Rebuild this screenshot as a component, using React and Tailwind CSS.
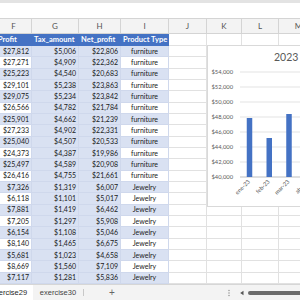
import React from 'react';

const rows = [
  ['$27,812', '$5,006', '$22,806', 'furniture'],
  ['$27,271', '$4,909', '$22,362', 'furniture'],
  ['$25,223', '$4,540', '$20,683', 'furniture'],
  ['$29,101', '$5,238', '$23,863', 'furniture'],
  ['$29,075', '$5,234', '$23,842', 'furniture'],
  ['$26,566', '$4,782', '$21,784', 'furniture'],
  ['$25,901', '$4,662', '$21,239', 'furniture'],
  ['$27,233', '$4,902', '$22,331', 'furniture'],
  ['$25,040', '$4,507', '$20,533', 'furniture'],
  ['$24,373', '$4,387', '$19,986', 'furniture'],
  ['$25,497', '$4,589', '$20,908', 'furniture'],
  ['$26,416', '$4,755', '$21,661', 'furniture'],
  ['$7,326', '$1,319', '$6,007', 'Jewelry'],
  ['$6,118', '$1,101', '$5,017', 'Jewelry'],
  ['$7,881', '$1,419', '$6,462', 'Jewelry'],
  ['$7,205', '$1,297', '$5,908', 'Jewelry'],
  ['$6,154', '$1,108', '$5,046', 'Jewelry'],
  ['$8,140', '$1,465', '$6,675', 'Jewelry'],
  ['$5,681', '$1,023', '$4,658', 'Jewelry'],
  ['$8,669', '$1,560', '$7,109', 'Jewelry'],
  ['$7,117', '$1,281', '$5,836', 'Jewelry'],
];

const letters = ['F', 'G', 'H', 'I', 'J', 'K', 'L', 'M'];
const headers = ['Profit', 'Tax_amount', 'Net_profit', 'Product Type'];
const gridCols = 'grid grid-cols-[36px_47px_42px_48px_38px_35px_37px_40px]';

const ticks = ['$54,000', '$52,000', '$50,000', '$48,000', '$46,000', '$44,000', '$42,000', '$40,000'];
const bars = [
  { label: 'ene-23', top: 72 },
  { label: 'feb-23', top: 92 },
  { label: 'mar-23', top: 68 },
  { label: 'abr-23', top: 78 },
];

function Chart() {
  return (
    <div className="absolute left-[207px] top-[26px] w-[200px] h-[162px] bg-white border border-[#d9d9d9]">
      <div className="pl-[66px] pt-[6px] text-[10.5px] leading-none text-[#595959] font-['Lato',sans-serif]">
        2023 Income
      </div>
      <svg className="absolute left-0 top-0" width="200" height="162">
        {ticks.map((t, i) => (
          <g key={t}>
            <line x1="32" x2="200" y1={26 + i * 15} y2={26 + i * 15} stroke={i === 7 ? '#bfbfbf' : '#e3e3e3'} strokeWidth="1" />
            <text x="25" y={28 + i * 15} textAnchor="end" fontSize="5.8" fill="#595959" fontFamily="Lato, sans-serif">
              {t}
            </text>
          </g>
        ))}
        {bars.map((b, i) => {
          const cx = 41.5 + i * 19.75;
          return (
            <g key={b.label}>
              <rect x={cx - 2.75} y={b.top} width="5.5" height={131 - b.top} fill="#4472c4" />
              <text
                x={cx + 1}
                y="136"
                textAnchor="end"
                fontSize="5.8"
                fill="#595959"
                fontFamily="Lato, sans-serif"
                transform={`rotate(-45 ${cx + 1} 136)`}
              >
                {b.label}
              </text>
            </g>
          );
        })}
      </svg>
    </div>
  );
}

function DataRow({ row, index }) {
  const band = index % 2 === 0;
  const fill = band ? 'bg-[#d9e1f2]' : 'bg-white';
  const num = 'flex items-center justify-end pr-[2px] border-r border-b border-[#cfd8ec]';
  return (
    <div className={`${gridCols} h-[11.33px] text-[7px] leading-none text-[#1a1a1a]`}>
      <div className={`${num} ${fill}`}>{row[0]}</div>
      <div className={`${num} bg-[#d9e1f2]`}>{row[1]}</div>
      <div className={`${num} bg-[#d9e1f2]`}>{row[2]}</div>
      <div className={`flex items-center justify-center border-r border-b border-[#cfd8ec] ${fill}`}>{row[3]}</div>
      <div className="border-r border-b border-[#e1e1e1]" />
      <div className="border-r border-b border-[#e1e1e1]" />
      <div className="border-r border-b border-[#e1e1e1]" />
      <div className="border-r border-b border-[#e1e1e1]" />
    </div>
  );
}

export default function App() {
  return (
    <div className="w-[300px] h-[300px] overflow-hidden bg-white flex flex-col font-['Lato',sans-serif]">
      <div className="h-[3px] shrink-0 bg-[#e3e3e3]" />
      <div className="h-[16px] shrink-0 bg-white border-b border-[#d4d4d4]" />

      <div className="relative flex-1 overflow-hidden">
        <div className="ml-[-4px]">
          {/* column letters */}
          <div className={`${gridCols} h-[15px] bg-[#f3f3f3] text-[8px] text-[#555]`}>
            {letters.map((l) => (
              <div key={l} className="flex items-center justify-center border-r border-b border-[#d4d4d4]">
                {l}
              </div>
            ))}
          </div>

          {/* table header */}
          <div className={`${gridCols} h-[12px] text-[7.5px] leading-none font-bold text-white`}>
            {headers.map((h) => (
              <div key={h} className="flex items-center pl-[2px] bg-[#4472c4] whitespace-nowrap overflow-hidden">
                {h}
              </div>
            ))}
            <div className="border-r border-b border-[#e1e1e1]" />
            <div className="border-r border-b border-[#e1e1e1]" />
            <div className="border-r border-b border-[#e1e1e1]" />
            <div className="border-r border-b border-[#e1e1e1]" />
          </div>

          {rows.map((r, i) => (
            <DataRow key={i} row={r} index={i} />
          ))}
        </div>

        <Chart />
      </div>

      {/* sheet tabs */}
      <div className="h-[16px] shrink-0 flex items-stretch bg-[#f3f3f3] border-t border-[#d6d6d6] font-['Liberation_Sans',sans-serif] text-[7.5px] text-[#444] overflow-hidden">
        <div className="ml-[-15px] w-[48px] shrink-0 bg-white flex items-center justify-center">
          <span className="relative text-[#1f1f1f]">
            exercise29
            <span className="absolute left-0 right-0 bottom-[-4px] h-[1.5px] bg-[#107c41]" />
          </span>
        </div>
        <div className="w-[50px] shrink-0 flex items-center justify-center">exercise30</div>
        <div className="w-px shrink-0 my-[4px] bg-[#c8c8c8]" />
        <div className="w-[56px] shrink-0 flex items-center justify-center text-[10px] text-[#666]">+</div>
        <div className="flex-1" />
        <div className="w-[76px] shrink-0 flex items-center overflow-hidden">
          <svg width="10" height="10" className="shrink-0">
            <circle cx="5" cy="2.5" r="0.7" fill="#8a8a8a" />
            <circle cx="5" cy="5" r="0.7" fill="#8a8a8a" />
            <circle cx="5" cy="7.5" r="0.7" fill="#8a8a8a" />
          </svg>
          <svg width="6" height="6" className="ml-[5px] shrink-0">
            <path d="M4.5 0.8 L1.2 3 L4.5 5.2 Z" fill="#555" />
          </svg>
          <div className="ml-[3px] w-[70px] h-[4px] shrink-0 rounded-full bg-[#6b6b6b]" />
        </div>
      </div>
    </div>
  );
}
